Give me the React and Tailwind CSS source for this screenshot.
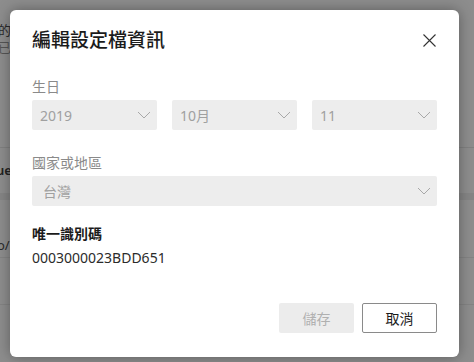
import React from "react";

const Chevron = () => (
  <svg width="14" height="8" viewBox="0 0 14 8" fill="none" className="shrink-0">
    <path d="M1 1l6 6 6-6" stroke="#a8a8a8" strokeWidth="1" />
  </svg>
);

const SelectBox = ({ value, className = "" }) => (
  <div
    className={`h-[30px] bg-[#ededed] rounded-[2px] flex items-center justify-between pl-[8px] pr-[6px] text-[14px] text-[#a0a0a0] ${className}`}
  >
    <span>{value}</span>
    <Chevron />
  </div>
);

const App = () => {
  return (
    <div className="relative w-[474px] h-[362px] overflow-hidden bg-[#8d8d8d] font-['Noto_Sans','Noto_Sans_CJK_TC',sans-serif]">
      {/* page behind the overlay */}
      <div className="flex flex-col text-[13px] text-[#2a2a2a]">
        <div className="h-[148px] border-b border-[#808080] pt-[22px] leading-[17px]">
          <div className="ml-[-2px]">的</div>
          <div className="ml-[-2px] text-[#555]">已</div>
        </div>
        <div className="h-[45px] flex items-center ml-[-4px] font-semibold text-[#222]">ue</div>
        <div className="h-[7px] bg-[#858585]" />
        <div className="h-[58px] border-b border-[#838383] flex items-end pb-[2px] ml-[-3px]">o/</div>
        <div className="h-[47px] border-b border-[#838383]" />
      </div>

      {/* dialog */}
      <div className="absolute left-[10px] top-[10px] w-[449px] h-[347px] bg-white rounded-[6px] shadow-[0_0_14px_rgba(0,0,0,0.35)] flex flex-col px-[22px] pt-[16px] pb-[24px]">
        <div className="flex items-center justify-between">
          <h2 className="text-[19px] leading-[28px] font-medium text-[#1b1b1b]">編輯設定檔資訊</h2>
          <button type="button" className="mr-[1px] mt-[1px]" aria-label="關閉">
            <svg width="13" height="13" viewBox="0 0 13 13" fill="none">
              <path d="M0.5 0.5l12 12M12.5 0.5l-12 12" stroke="#333" strokeWidth="1.1" />
            </svg>
          </button>
        </div>

        <div className="mt-[23px] text-[14px] leading-[20px] text-[#8a8a8a]">生日</div>
        <div className="mt-[3px] grid grid-cols-3 gap-[15px]">
          <SelectBox value="2019" />
          <SelectBox value="10月" />
          <SelectBox value="11" />
        </div>

        <div className="mt-[23px] text-[14px] leading-[20px] text-[#8a8a8a]">國家或地區</div>
        <SelectBox value="台灣" className="mt-[3px] pl-[11px]" />

        <div className="mt-[18px] text-[14px] leading-[20px] font-semibold text-[#1b1b1b]">唯一識別碼</div>
        <div className="mt-[4px] text-[14px] leading-[20px] text-[#2b2b2b]">0003000023BDD651</div>

        <div className="mt-auto flex justify-end gap-[8px]">
          <button
            type="button"
            disabled
            className="w-[75px] h-[30px] bg-[#ececec] rounded-[2px] text-[14px] text-[#b0b0b0]"
          >
            儲存
          </button>
          <button
            type="button"
            className="w-[75px] h-[30px] bg-white border border-[#8a8a8a] rounded-[2px] text-[14px] text-[#1b1b1b]"
          >
            取消
          </button>
        </div>
      </div>
    </div>
  );
};

export default App;
